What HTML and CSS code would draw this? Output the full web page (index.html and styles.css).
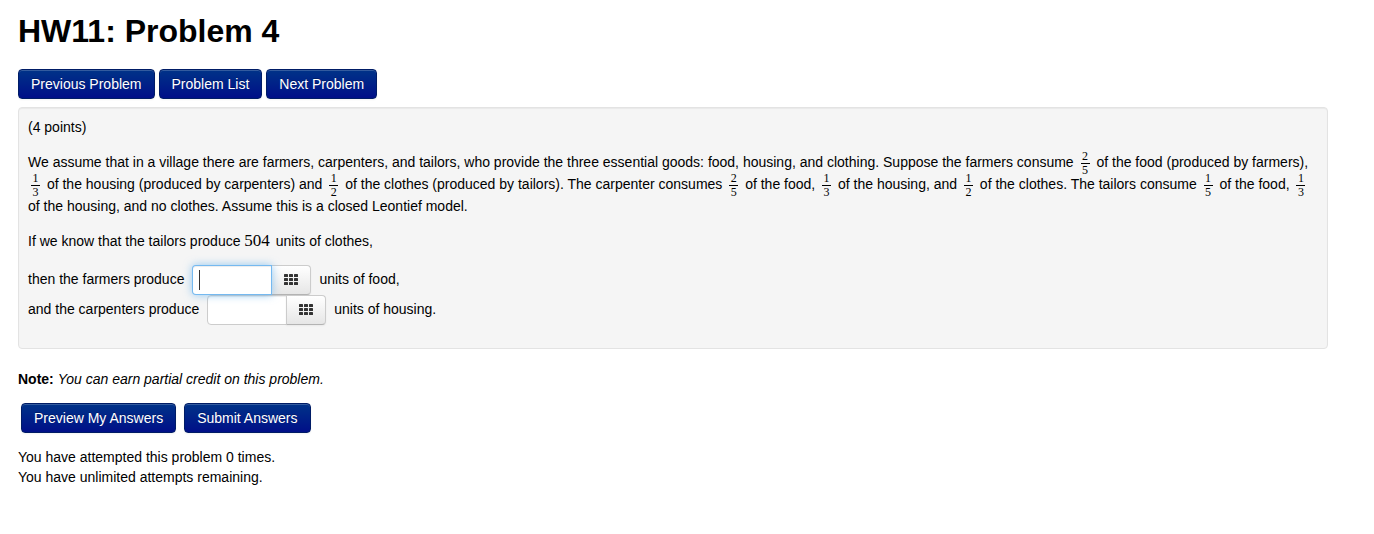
FILE: index.html
```
<!DOCTYPE html>
<html lang="en">
<head>
    <meta charset="UTF-8">
    <meta name="viewport" content="width=device-width, initial-scale=1.0">
    <title>HW11: Problem 4</title>
    <link rel="stylesheet" href="styles.css">
</head>
<body>
    <svg class="sprite" aria-hidden="true">
        <symbol id="keypad" viewBox="0 0 14 11">
            <rect x="0" y="0" width="4" height="3" rx="0.6"/>
            <rect x="5" y="0" width="4" height="3" rx="0.6"/>
            <rect x="10" y="0" width="4" height="3" rx="0.6"/>
            <rect x="0" y="4" width="4" height="3" rx="0.6"/>
            <rect x="5" y="4" width="4" height="3" rx="0.6"/>
            <rect x="10" y="4" width="4" height="3" rx="0.6"/>
            <rect x="0" y="8" width="4" height="3" rx="0.6"/>
            <rect x="5" y="8" width="4" height="3" rx="0.6"/>
            <rect x="10" y="8" width="4" height="3" rx="0.6"/>
        </symbol>
    </svg>

    <h1>HW11: Problem 4</h1>

    <nav class="problem-nav">
        <a class="btn" href="#previous">Previous Problem</a>
        <a class="btn" href="#list">Problem List</a>
        <a class="btn" href="#next">Next Problem</a>
    </nav>

    <form>
        <div class="problem">
            <p>(4 points)</p>

            <p class="statement">
                We assume that in a village there are farmers, carpenters, and tailors, who provide the three essential goods: food, housing, and clothing. Suppose the farmers consume
                <span class="frac"><span>2</span><span class="den">5</span></span> of the food (produced by farmers),
                <span class="frac"><span>1</span><span class="den">3</span></span> of the housing (produced by carpenters) and
                <span class="frac"><span>1</span><span class="den">2</span></span> of the clothes (produced by tailors). The carpenter consumes
                <span class="frac"><span>2</span><span class="den">5</span></span> of the food,
                <span class="frac"><span>1</span><span class="den">3</span></span> of the housing, and
                <span class="frac"><span>1</span><span class="den">2</span></span> of the clothes. The tailors consume
                <span class="frac"><span>1</span><span class="den">5</span></span> of the food,
                <span class="frac"><span>1</span><span class="den">3</span></span> of the housing, and no clothes. Assume this is a closed Leontief model.
            </p>

            <p>If we know that the tailors produce <span class="math">504</span> units of clothes,</p>

            <div class="answers">
                <div class="answer">
                    <label for="food">then the farmers produce</label>
                    <span class="input-group">
                        <input type="text" id="food" autocomplete="off" autofocus>
                        <button type="button" aria-label="Open equation editor"><svg><use href="#keypad"/></svg></button>
                    </span>
                    <span>units of food,</span>
                </div>
                <div class="answer">
                    <label for="housing">and the carpenters produce</label>
                    <span class="input-group">
                        <input type="text" id="housing" autocomplete="off">
                        <button type="button" aria-label="Open equation editor"><svg><use href="#keypad"/></svg></button>
                    </span>
                    <span>units of housing.</span>
                </div>
            </div>
        </div>

        <p class="note"><b>Note:</b> <i>You can earn partial credit on this problem.</i></p>

        <div class="submit-buttons">
            <button type="submit" class="btn">Preview My Answers</button>
            <button type="submit" class="btn">Submit Answers</button>
        </div>
    </form>

    <p class="attempts">
        You have attempted this problem 0 times.<br>
        You have unlimited attempts remaining.
    </p>
</body>
</html>
```
FILE: styles.css
```
* {
    box-sizing: border-box;
}
body {
    margin: 11px 46px 20px 18px;
    font-family: "Helvetica Neue", Helvetica, "Liberation Sans", Arial, sans-serif;
    font-size: 14px;
    line-height: 20px;
    color: #000;
    background-color: #fff;
}
h1 {
    margin: 0 0 18px;
    font-size: 32px;
    line-height: 40px;
}
p {
    margin: 0 0 14px;
}
.sprite {
    display: none;
}
.btn {
    height: 30px;
    padding: 4px 12px;
    border: 1px solid #001c66;
    border-radius: 4px;
    font: inherit;
    color: #fff;
    text-decoration: none;
    text-shadow: 0 -1px 0 rgba(0, 0, 0, 0.25);
    background: linear-gradient(#003388, #000f88);
    box-shadow: inset 0 1px 0 rgba(255, 255, 255, 0.2), 0 1px 2px rgba(0, 0, 0, 0.05);
    cursor: pointer;
}
.btn:hover {
    background: #000f88;
}
.problem-nav {
    display: flex;
    gap: 4px;
    margin-bottom: 8px;
}
.problem {
    padding: 9px;
    border: 1px solid #e3e3e3;
    border-radius: 4px;
    background-color: #f5f5f5;
    box-shadow: inset 0 1px 1px rgba(0, 0, 0, 0.05);
}
.statement {
    line-height: 22px;
}
.frac {
    display: inline-flex;
    flex-direction: column;
    width: 9px;
    margin: -4px 3px;
    vertical-align: middle;
    text-align: center;
    font-family: "Liberation Serif", serif;
    font-size: 12px;
    line-height: 13px;
}
.den {
    border-top: 1px solid #000;
}
.math {
    margin-right: 2px;
    font-family: "Liberation Serif", serif;
    font-size: 17px;
    line-height: 18px;
}
.answers {
    margin-bottom: 14px;
}
.answer {
    display: flex;
    gap: 8px;
    line-height: 28px;
}
.input-group {
    display: flex;
}
.input-group input {
    width: 80px;
    height: 30px;
    padding: 4px 6px;
    border: 1px solid #ccc;
    border-radius: 4px 0 0 4px;
    font: inherit;
    background-color: #fff;
    box-shadow: inset 0 1px 1px rgba(0, 0, 0, 0.075);
}
.input-group input:focus {
    z-index: 1;
    outline: 0;
    border-color: rgba(82, 168, 236, 0.8);
    box-shadow: inset 0 1px 1px rgba(0, 0, 0, 0.075), 0 0 8px rgba(82, 168, 236, 0.6);
    /* steady caret */
    caret-color: transparent;
    background: linear-gradient(#333, #333) 6px 4px / 1px 20px no-repeat #fff;
}
.input-group button {
    display: flex;
    align-items: center;
    justify-content: center;
    width: 40px;
    height: 30px;
    margin-left: -1px;
    padding: 0 0 1px;
    border: 1px solid #ccc;
    border-bottom-color: #b3b3b3;
    border-radius: 0 4px 4px 0;
    background: linear-gradient(#fff, #e6e6e6);
    box-shadow: inset 0 1px 0 rgba(255, 255, 255, 0.2), 0 1px 2px rgba(0, 0, 0, 0.05);
    cursor: pointer;
}
.input-group svg {
    width: 14px;
    height: 11px;
    fill: #333;
}
.note {
    margin: 20px 0 14px;
}
.submit-buttons {
    display: flex;
    gap: 8px;
    margin: 0 3px 14px;
}
.attempts {
    margin: 0;
}
```
